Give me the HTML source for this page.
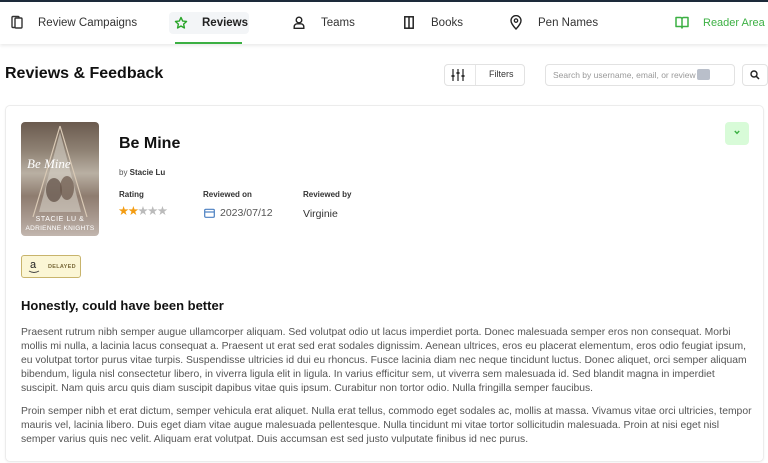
<!DOCTYPE html>
<html><head><style>
*{margin:0;padding:0;box-sizing:border-box}
body{width:768px;height:463px;overflow:hidden;background:#fff;font-family:"Liberation Sans","DejaVu Sans",sans-serif;color:#222;position:relative}
.abs{position:absolute}
.topbar{left:0;top:0;width:768px;height:2px;background:#1d2a3a}
.nav{left:0;top:2px;width:768px;height:42px;background:#fff;box-shadow:0 2px 3px rgba(0,0,0,.08)}
.ni{position:absolute;top:15px;font-size:11.5px;color:#333;white-space:nowrap}
.pre{white-space:nowrap}
.para{font-size:10.35px;color:#555;line-height:14px;white-space:nowrap}
</style></head><body>
<div class="abs topbar"></div>
<div class="abs nav">
  <svg class="abs" style="left:11px;top:13px" width="12" height="14" viewBox="0 0 12 14"><rect x="1" y="1.5" width="7" height="11" rx="1" fill="none" stroke="#333" stroke-width="1.4"/><rect x="4" y="3" width="7" height="10" rx="1" fill="#fff" stroke="#333" stroke-width="1.4"/></svg>
  <div class="ni" style="left:38px">Review Campaigns</div>
  <div class="abs" style="left:169px;top:10px;width:80px;height:22px;background:#f3f5f7;border-radius:4px"></div>
  <svg class="abs" style="left:174px;top:14px" width="14" height="14" viewBox="0 0 24 24"><path d="M12 2.5l2.9 6.2 6.6.7-5 4.5 1.4 6.6L12 17.2l-5.9 3.3 1.4-6.6-5-4.5 6.6-.7z" fill="none" stroke="#2aa52a" stroke-width="2.4" stroke-linejoin="round"/></svg>
  <div class="ni" style="left:202px;font-weight:bold;color:#222">Reviews</div>
  <div class="abs" style="left:175px;top:40px;width:67px;height:2px;background:#3cb043"></div>
  <svg class="abs" style="left:293px;top:14px" width="12" height="13" viewBox="0 0 12 13"><circle cx="6" cy="4" r="2.8" fill="none" stroke="#222" stroke-width="1.4"/><path d="M1.2 12.3v-1.5a3 3 0 0 1 3-3h3.6a3 3 0 0 1 3 3v1.5z" fill="none" stroke="#222" stroke-width="1.4"/></svg>
  <div class="ni" style="left:321px">Teams</div>
  <svg class="abs" style="left:404px;top:14px" width="10" height="13" viewBox="0 0 10 13"><rect x=".8" y=".8" width="8.4" height="11.4" fill="none" stroke="#222" stroke-width="1.5"/><path d="M5 1v11" stroke="#222" stroke-width="1.5"/></svg>
  <div class="ni" style="left:431px">Books</div>
  <svg class="abs" style="left:510px;top:13px" width="12" height="15" viewBox="0 0 12 15"><path d="M6 14S1 8.8 1 5.6a5 5 0 0 1 10 0C11 8.8 6 14 6 14z" fill="none" stroke="#222" stroke-width="1.4"/><circle cx="6" cy="5.6" r="1.7" fill="none" stroke="#222" stroke-width="1.3"/></svg>
  <div class="ni" style="left:538px">Pen Names</div>
  <svg class="abs" style="left:675px;top:14px" width="14" height="13" viewBox="0 0 14 13"><path d="M1 1.5h4.5A1.5 1.5 0 0 1 7 3v9a1.5 1.5 0 0 0-1.5-1.5H1zM13 1.5H8.5A1.5 1.5 0 0 0 7 3v9a1.5 1.5 0 0 1 1.5-1.5H13z" fill="none" stroke="#3cb043" stroke-width="1.5" stroke-linejoin="round"/></svg>
  <div class="ni" style="left:703px;color:#3cb043;font-size:11px">Reader Area</div>
</div>

<div class="abs pre" style="left:5px;top:65px;font-size:16px;font-weight:bold;color:#111">Reviews &amp; Feedback</div>
<div class="abs" style="left:444px;top:64px;width:81px;height:22px;border:1px solid #e2e2e2;border-radius:4px"></div>
<div class="abs" style="left:475px;top:65px;width:1px;height:20px;background:#e6e6e6"></div>
<svg class="abs" style="left:451px;top:69px" width="14" height="12" viewBox="0 0 14 12"><path d="M2 0v12M7 0v12M12 0v12" stroke="#333" stroke-width="1.3"/><rect x="0.5" y="6" width="3" height="2" fill="#333"/><rect x="5.5" y="3" width="3" height="2" fill="#333"/><rect x="10.5" y="6" width="3" height="2" fill="#333"/></svg>
<div class="abs pre" style="left:489px;top:69px;font-size:9px;color:#333">Filters</div>
<div class="abs" style="left:545px;top:64px;width:190px;height:22px;border:1px solid #e2e2e2;border-radius:4px"></div>
<div class="abs pre" style="left:553px;top:70px;font-size:8.5px;color:#999">Search by username, email, or review t</div>
<div class="abs" style="left:697px;top:69px;width:13px;height:11px;background:#b9bfca;border-radius:2px"></div>
<div class="abs" style="left:742px;top:64px;width:26px;height:22px;border:1px solid #e2e2e2;border-radius:4px"></div>
<svg class="abs" style="left:750px;top:70px" width="10" height="10" viewBox="0 0 10 10"><circle cx="4" cy="4" r="3" fill="none" stroke="#222" stroke-width="1.4"/><path d="M6.3 6.3L9 9" stroke="#222" stroke-width="1.5"/></svg>

<div class="abs" style="left:5px;top:105px;width:759px;height:357px;border:1px solid #ececec;border-radius:5px;box-shadow:0 1px 2px rgba(0,0,0,.05)"></div>
<div class="abs" style="left:725px;top:122px;width:24px;height:23px;background:#d8fbd8;border-radius:4px"></div>
<svg class="abs" style="left:734px;top:130px" width="6" height="5" viewBox="0 0 6 5"><path d="M.8 1l2.2 2.4L5.2 1" fill="none" stroke="#3cb043" stroke-width="1.4"/></svg>

<div class="abs" style="left:21px;top:122px;width:78px;height:114px;border-radius:4px;overflow:hidden;background:linear-gradient(180deg,#6a5a4e 0%,#8f8274 25%,#b9b0a3 45%,#8e7c6f 65%,#a99a90 85%,#c2b6ae 100%)">
  <svg class="abs" style="left:0;top:0" width="78" height="114" viewBox="0 0 78 114"><path d="M39 4L12 95M39 4L66 95" stroke="#d9c9b5" stroke-width="1.2"/><path d="M39 10L18 90H60z" fill="#d6d0c6" opacity=".6"/><ellipse cx="33" cy="68" rx="8" ry="12" fill="#5b4a40" opacity=".7"/><ellipse cx="46" cy="66" rx="7" ry="12" fill="#6a5548" opacity=".7"/></svg>
  <div class="abs pre" style="left:6px;top:34px;font-family:'Liberation Serif',serif;font-style:italic;font-size:13px;color:#fff">Be Mine</div>
  <div class="abs pre" style="left:0;width:78px;text-align:center;top:94px;font-size:7px;letter-spacing:.6px;color:#fff">STACIE LU &amp;</div>
  <div class="abs pre" style="left:0;width:78px;text-align:center;top:103px;font-size:6.5px;letter-spacing:.3px;color:#fff">ADRIENNE KNIGHTS</div>
</div>
<div class="abs pre" style="left:119px;top:135px;font-size:16px;font-weight:bold;color:#111">Be Mine</div>
<div class="abs pre" style="left:119px;top:168px;font-size:8px;color:#555">by <b style="color:#333">Stacie Lu</b></div>
<div class="abs pre" style="left:119px;top:190px;font-size:8px;font-weight:bold;color:#333">Rating</div>
<div class="abs pre" style="left:203px;top:190px;font-size:8px;font-weight:bold;color:#333">Reviewed on</div>
<div class="abs pre" style="left:303px;top:190px;font-size:8px;font-weight:bold;color:#333">Reviewed by</div>
<div class="abs pre" style="left:118px;top:203px;font-size:12.5px;letter-spacing:-1.5px"><span style="color:#f39c12">★★</span><span style="color:#bbb">★★★</span></div>
<svg class="abs" style="left:204px;top:208px" width="11" height="10" viewBox="0 0 11 10"><rect x=".7" y="1.3" width="9.6" height="8" rx="1" fill="none" stroke="#4a7fc1" stroke-width="1.2"/><path d="M.7 4h9.6" stroke="#4a7fc1" stroke-width="1.2"/></svg>
<div class="abs pre" style="left:220px;top:207px;font-size:10.5px;color:#555">2023/07/12</div>
<div class="abs pre" style="left:303px;top:208px;font-size:10.5px;color:#333">Virginie</div>

<div class="abs" style="left:21px;top:255px;width:60px;height:23px;background:#fbf6d5;border:1px solid #c8b46c;border-radius:3px"></div>
<div class="abs pre" style="left:30px;top:259px;font-size:11px;color:#222">a</div>
<svg class="abs" style="left:28px;top:270px" width="12" height="4" viewBox="0 0 12 4"><path d="M1 1q5 3 10 0" fill="none" stroke="#444" stroke-width="1"/></svg>
<div class="abs pre" style="left:48px;top:264px;font-size:5.5px;font-weight:bold;color:#7a6a3a;letter-spacing:.3px">DELAYED</div>

<div class="abs pre" style="left:21px;top:298px;font-size:13px;font-weight:bold;color:#111">Honestly, could have been better</div>
<div class="abs para" style="left:21px;top:326px">Praesent rutrum nibh semper augue ullamcorper aliquam. Sed volutpat odio ut lacus imperdiet porta. Donec malesuada semper eros non consequat. Morbi<br>mollis mi nulla, a lacinia lacus consequat a. Praesent ut erat sed erat sodales dignissim. Aenean ultrices, eros eu placerat elementum, eros odio feugiat ipsum,<br>eu volutpat tortor purus vitae turpis. Suspendisse ultricies id dui eu rhoncus. Fusce lacinia diam nec neque tincidunt luctus. Donec aliquet, orci semper aliquam<br>bibendum, ligula nisl consectetur libero, in viverra ligula elit in ligula. In varius efficitur sem, ut viverra sem malesuada id. Sed blandit magna in imperdiet<br>suscipit. Nam quis arcu quis diam suscipit dapibus vitae quis ipsum. Curabitur non tortor odio. Nulla fringilla semper faucibus.</div>
<div class="abs para" style="left:21px;top:405px">Proin semper nibh et erat dictum, semper vehicula erat aliquet. Nulla erat tellus, commodo eget sodales ac, mollis at massa. Vivamus vitae orci ultricies, tempor<br>mauris vel, lacinia libero. Duis eget diam vitae augue malesuada pellentesque. Nulla tincidunt mi vitae tortor sollicitudin malesuada. Proin at nisi eget nisl<br>semper varius quis nec velit. Aliquam erat volutpat. Duis accumsan est sed justo vulputate finibus id nec purus.</div>
</body></html>
